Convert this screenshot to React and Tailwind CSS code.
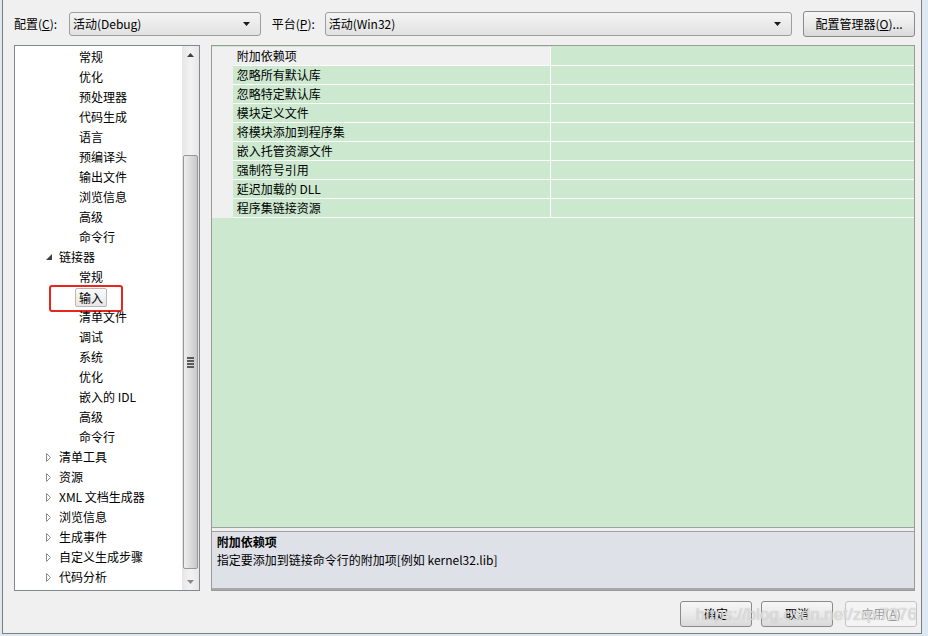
const font = { fontFamily: '"Noto Sans CJK SC", "Microsoft YaHei", sans-serif' };

const tree = [
  { t: "常规", lvl: 2 },
  { t: "优化", lvl: 2 },
  { t: "预处理器", lvl: 2 },
  { t: "代码生成", lvl: 2 },
  { t: "语言", lvl: 2 },
  { t: "预编译头", lvl: 2 },
  { t: "输出文件", lvl: 2 },
  { t: "浏览信息", lvl: 2 },
  { t: "高级", lvl: 2 },
  { t: "命令行", lvl: 2 },
  { t: "链接器", lvl: 1, open: true },
  { t: "常规", lvl: 2 },
  { t: "输入", lvl: 2, sel: true },
  { t: "清单文件", lvl: 2 },
  { t: "调试", lvl: 2 },
  { t: "系统", lvl: 2 },
  { t: "优化", lvl: 2 },
  { t: "嵌入的 IDL", lvl: 2 },
  { t: "高级", lvl: 2 },
  { t: "命令行", lvl: 2 },
  { t: "清单工具", lvl: 1 },
  { t: "资源", lvl: 1 },
  { t: "XML 文档生成器", lvl: 1 },
  { t: "浏览信息", lvl: 1 },
  { t: "生成事件", lvl: 1 },
  { t: "自定义生成步骤", lvl: 1 },
  { t: "代码分析", lvl: 1 },
];

const props = [
  "附加依赖项",
  "忽略所有默认库",
  "忽略特定默认库",
  "模块定义文件",
  "将模块添加到程序集",
  "嵌入托管资源文件",
  "强制符号引用",
  "延迟加载的 DLL",
  "程序集链接资源",
];

function Combo({ children, className }) {
  return (
    <div
      className={`h-[24px] flex items-center justify-between pl-[3px] pr-[10px] border border-[#9e9e9e] rounded-[3px] bg-gradient-to-b from-[#f4f4f4] to-[#e2e2e2] ${className}`}
    >
      <span>{children}</span>
      <svg width="7" height="4" viewBox="0 0 7 4">
        <path d="M0 0h7L3.5 4z" fill="#1a1a1a" />
      </svg>
    </div>
  );
}

function Button({ children, className = "", disabled }) {
  return (
    <div
      className={`h-[26px] flex items-center justify-center border rounded-[3px] ${
        disabled
          ? "border-[#c4c4c4] bg-[#f4f4f4] text-[#9a9a9a]"
          : "border-[#8a8a8a] bg-gradient-to-b from-[#f6f6f6] via-[#ebebeb] to-[#d9d9d9] text-black"
      } ${className}`}
    >
      {children}
    </div>
  );
}

function TreeItem({ item }) {
  return (
    <div className="h-[20px] flex items-center relative">
      {item.lvl === 1 ? (
        <>
          <span className="w-[44px] pl-[31px] flex items-center">
            {item.open ? (
              <svg width="6" height="6" viewBox="0 0 6 6">
                <path d="M6 0v6H0z" fill="#404040" />
              </svg>
            ) : (
              <svg width="5" height="9" viewBox="0 0 5 9">
                <path d="M0.5 0.5L4.5 4.5L0.5 8.5z" fill="none" stroke="#8c8c8c" />
              </svg>
            )}
          </span>
          <span>{item.t}</span>
        </>
      ) : item.sel ? (
        <>
          <span className="ml-[60px] px-[3px] h-[19px] leading-[17px] border border-[#b8b8b8] rounded-[2px] bg-gradient-to-b from-[#fafafa] to-[#e6e6e6]">
            {item.t}
          </span>
          <span className="absolute left-[34px] top-[-2px] w-[74px] h-[27px] border-2 border-[#e8261e] rounded-[3px]" />
        </>
      ) : (
        <span className="ml-[64px]">{item.t}</span>
      )}
    </div>
  );
}

export default function App() {
  return (
    <div className="w-[928px] h-[636px] bg-[#dde8f2] text-[12px] text-black overflow-hidden" style={font}>
      <div className="ml-[2px] w-[920px] h-[634px] bg-[#f0f0f0] border-l border-r border-b border-[#7f7f7f] pl-[11px] pr-[6px] flex flex-col relative">
        {/* ── Top config row ── */}
        <div className="mt-[12px] h-[24px] flex items-center">
          <span className="w-[55px]">
            配置(<u>C</u>):
          </span>
          <Combo className="w-[192px]">活动(Debug)</Combo>
          <span className="ml-[11px] w-[53px]">
            平台(<u>P</u>):
          </span>
          <Combo className="w-[468px]">活动(Win32)</Combo>
          <Button className="ml-[11px] w-[112px] h-[25px]">
            配置管理器(<u>O</u>)...
          </Button>
        </div>

        {/* ── Main area ── */}
        <div className="mt-[9px] h-[546px] flex gap-[11px]">
          {/* Tree */}
          <div className="w-[186px] border border-[#828790] bg-white flex">
            <div className="flex-1 pt-[1px] overflow-hidden">
              {tree.map((it, i) => (
                <TreeItem key={i} item={it} />
              ))}
            </div>
            <div className="w-[17px] bg-gradient-to-r from-[#e6e6e6] via-[#f2f2f2] to-[#e6e6e6] flex flex-col items-center">
              <div className="h-[17px] flex items-center justify-center">
                <svg width="7" height="4" viewBox="0 0 7 4">
                  <path d="M3.5 0L7 4H0z" fill="#404040" />
                </svg>
              </div>
              <div className="mt-[92px] w-[15px] h-[414px] border border-[#979797] rounded-[2px] bg-gradient-to-r from-[#eeeeee] via-[#dcdcdc] to-[#c8c8c8] flex items-center justify-center">
                <div className="flex flex-col gap-[1px]">
                  <div className="w-[7px] h-[2px] bg-[#5a5a5a]" />
                  <div className="w-[7px] h-[2px] bg-[#5a5a5a]" />
                  <div className="w-[7px] h-[2px] bg-[#5a5a5a]" />
                  <div className="w-[7px] h-[2px] bg-[#5a5a5a]" />
                </div>
              </div>
              <div className="mt-auto h-[17px] flex items-center justify-center">
                <svg width="7" height="4" viewBox="0 0 7 4">
                  <path d="M0 0h7L3.5 4z" fill="#8a8a8a" />
                </svg>
              </div>
            </div>
          </div>

          {/* Property grid */}
          <div className="w-[705px] border border-[#9a9a9a] flex flex-col">
            <div className="flex-1 bg-[#cce8cf] flex flex-col pt-[1px]">
              {props.map((p, i) => (
                <div key={i} className="h-[19px] flex">
                  <div className="w-[21px] bg-[#f0f0f0]" />
                  <div className="flex-1 flex border-b border-white">
                    <div
                      className={`w-[318px] pl-[4px] leading-[18px] border-r border-white ${
                        i === 0 ? "bg-[#f0f0f0]" : "bg-[#cce8cf]"
                      }`}
                    >
                      {p}
                    </div>
                    <div className="flex-1 bg-[#cce8cf]" />
                  </div>
                </div>
              ))}
            </div>
            <div className="h-[5px] border-t border-b border-[#a0a0a0] bg-[#f0f0f0]" />
            <div className="h-[58px] bg-[#dfe1e8] px-[5px] pt-[1px] border-b-2 border-[#a8a8a8]">
              <div className="font-bold leading-[18px]">附加依赖项</div>
              <div className="leading-[18px]">指定要添加到链接命令行的附加项[例如 kernel32.lib]</div>
            </div>
          </div>
        </div>

        {/* ── Bottom buttons ── */}
        <div className="mt-[10px] mr-[-2px] flex justify-end gap-[9px] relative">
          <Button className="w-[72px]">确定</Button>
          <Button className="w-[72px]">取消</Button>
          <Button className="ml-[3px] w-[72px]" disabled>
            应用(<u>A</u>)
          </Button>
          <div
            className="absolute right-[0px] top-[4px] text-[17px] leading-[20px] text-white/60 pointer-events-none"
            style={{ fontFamily: '"Liberation Sans", Arial, sans-serif', textShadow: "0 0 1px #a0a0a0" }}
          >
            https://blog.csdn.net/zqx7376
          </div>
        </div>
      </div>
    </div>
  );
}
